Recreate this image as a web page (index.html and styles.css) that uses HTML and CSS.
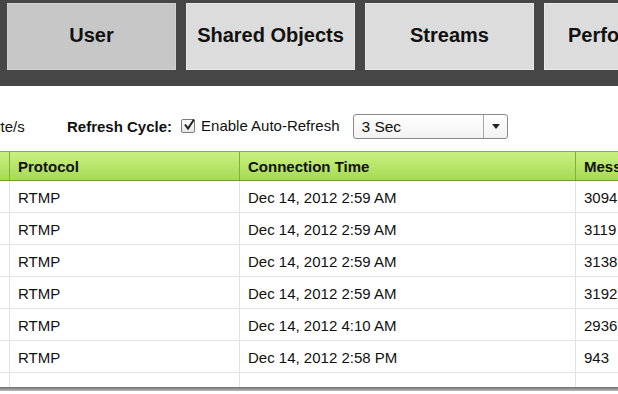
FILE: index.html
```html
<!DOCTYPE html>
<html>
<head>
<meta charset="utf-8">
<link rel="stylesheet" href="styles.css">
</head>
<body>
<div class="page">
  <div class="topbar">
    <div class="tab tab-active">User</div>
    <div class="tab">Shared Objects</div>
    <div class="tab">Streams</div>
    <div class="tab">Performance</div>
  </div>
  <div class="toolbar">
    <span class="rate">Byte/s</span>
    <span class="label">Refresh Cycle:</span>
    <span class="checkbox">
      <svg width="14" height="14" viewBox="0 0 14 14"><path d="M3 6.5 L6 10.5 L12 1.5" fill="none" stroke="#222" stroke-width="2"/></svg>
    </span>
    <span class="check-label">Enable Auto-Refresh</span>
    <div class="select">
      <span class="select-value">3 Sec</span>
      <span class="select-btn"><svg width="8" height="5" viewBox="0 0 8 5"><path d="M0 0 H8 L4 5 Z" fill="#222"/></svg></span>
    </div>
  </div>
  <div class="table">
    <div class="row head">
      <div class="cell"></div>
      <div class="cell">Protocol</div>
      <div class="cell">Connection Time</div>
      <div class="cell">Messages</div>
    </div>
    <div class="row"><div class="cell"></div><div class="cell">RTMP</div><div class="cell">Dec 14, 2012 2:59 AM</div><div class="cell">3094</div></div>
    <div class="row"><div class="cell"></div><div class="cell">RTMP</div><div class="cell">Dec 14, 2012 2:59 AM</div><div class="cell">3119</div></div>
    <div class="row"><div class="cell"></div><div class="cell">RTMP</div><div class="cell">Dec 14, 2012 2:59 AM</div><div class="cell">3138</div></div>
    <div class="row"><div class="cell"></div><div class="cell">RTMP</div><div class="cell">Dec 14, 2012 2:59 AM</div><div class="cell">3192</div></div>
    <div class="row"><div class="cell"></div><div class="cell">RTMP</div><div class="cell">Dec 14, 2012 4:10 AM</div><div class="cell">2936</div></div>
    <div class="row"><div class="cell"></div><div class="cell">RTMP</div><div class="cell">Dec 14, 2012 2:58 PM</div><div class="cell">943</div></div>
    <div class="row row-empty"><div class="cell"></div><div class="cell"></div><div class="cell"></div><div class="cell"></div></div>
  </div>
  <div class="bottom-line"></div>
</div>
</body>
</html>
```

FILE: styles.css
```css
html, body {
  margin: 0;
  padding: 0;
  background: #ffffff;
}
body {
  width: 618px;
  height: 394px;
  overflow: hidden;
  font-family: "Liberation Sans", Arial, sans-serif;
  color: #111;
}
.page {
  width: 618px;
  overflow: hidden;
}
.topbar {
  background: #464646;
  height: 86px;
  box-sizing: border-box;
  padding: 3px 0 0 7px;
  display: flex;
  gap: 10px;
  align-items: flex-start;
}
.tab {
  flex: none;
  width: 169px;
  height: 67px;
  box-sizing: border-box;
  background: #dcdcdc;
  border: 1px solid #e8e8e8;
  display: flex;
  align-items: center;
  justify-content: center;
  font-weight: bold;
  font-size: 20px;
  color: #111;
  padding-bottom: 2px;
}
.tab-active {
  background: #c7c7c7;
  border-color: #d0d0d0;
}
.tab:last-child {
  justify-content: flex-start;
  padding-left: 23px;
}
.toolbar {
  margin-top: 28px;
  margin-left: -17px;
  height: 25px;
  display: flex;
  align-items: center;
  font-size: 15px;
  white-space: nowrap;
}
.rate {
  width: 42px;
  flex: none;
}
.label {
  margin-left: 42px;
  font-weight: bold;
  font-size: 15px;
}
.checkbox {
  margin-left: 9px;
  width: 14px;
  height: 14px;
  flex: none;
  box-sizing: border-box;
  border: 1px solid #7d7d7d;
  border-radius: 2px;
  background: linear-gradient(#ffffff, #e6e6e6);
  display: flex;
  align-items: center;
  justify-content: center;
  position: relative;
  top: -1px;
}
.checkbox svg {
  margin-top: -2px;
  margin-right: -2px;
}
.check-label {
  margin-left: 6px;
  position: relative;
  top: -1px;
}
.select {
  margin-left: 14px;
  width: 155px;
  height: 25px;
  flex: none;
  box-sizing: border-box;
  border: 1px solid #8a8a8a;
  border-radius: 3px;
  background: linear-gradient(#ffffff, #f2f2f2);
  display: flex;
  align-items: stretch;
}
.select-value {
  flex: 1;
  padding-left: 7px;
  font-size: 15.5px;
  display: flex;
  align-items: center;
}
.select-btn {
  width: 23px;
  border-left: 1px solid #a8a8a8;
  display: flex;
  align-items: center;
  justify-content: center;
}
.table {
  margin-top: 12px;
}
.row {
  display: grid;
  grid-template-columns: 10px 230px 336px 60px;
  height: 32px;
  box-sizing: border-box;
  border-bottom: 1px solid #e4e4e4;
  font-size: 15px;
}
.cell {
  border-right: 1px solid #e2e2e2;
  padding-left: 8px;
  padding-top: 1px;
  display: flex;
  align-items: center;
  white-space: nowrap;
  overflow: hidden;
}
.head {
  height: 30px;
  background: linear-gradient(#c9f07f, #a6da55);
  border-top: 1px solid #84b440;
  border-bottom: 1px solid #6f9f2e;
  font-weight: bold;
  font-size: 15px;
}
.head .cell {
  border-right: 1px solid #7fae3a;
  padding-top: 0;
}
.row-empty {
  height: 14px;
  border-bottom: none;
}
.bottom-line {
  height: 4px;
  background: linear-gradient(#6e6e6e, #bdbdbd);
}
```
